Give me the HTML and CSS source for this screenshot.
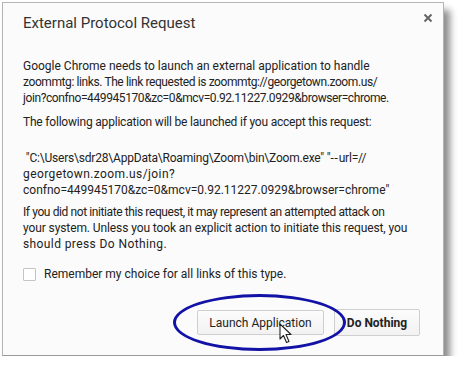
FILE: index.html
```html
<!DOCTYPE html>
<html lang="en">
<head>
  <meta charset="UTF-8" />
  <title>External Protocol Request</title>
  <link rel="stylesheet" href="styles.css">
</head>
<body>
  <div class="dialog">
    <div class="title-row">
      <h1 class="title">External Protocol Request</h1>
      <svg class="close" width="10" height="10" viewBox="0 0 10 10">
        <path d="M1.5 1.5 L8.5 8.5 M8.5 1.5 L1.5 8.5" stroke="#666" stroke-width="2"/>
      </svg>
    </div>

    <p class="msg">
      <span class="ln">Google Chrome needs to launch an external application to handle</span>
      <span class="ln tight">zoommtg: links. The link requested is zoommtg://georgetown.zoom.us/</span>
      <span class="ln tight">join?confno=449945170&amp;zc=0&amp;mcv=0.92.11227.0929&amp;browser=chrome.</span>
    </p>

    <p class="msg follow">
      <span class="ln snug">The following application will be launched if you accept this request:</span>
    </p>

    <p class="msg cmd">
      <span class="ln snug"> "C:\Users\sdr28\AppData\Roaming\Zoom\bin\Zoom.exe" "<span class="dash">--</span>url=//</span>
      <span class="ln loose">georgetown.zoom.us/join?</span>
      <span class="ln">confno=449945170&amp;zc=0&amp;mcv=0.92.11227.0929&amp;browser=chrome"</span>
    </p>

    <p class="msg">
      <span class="ln tight">If you did not initiate this request, it may represent an attempted attack on</span>
      <span class="ln slight">your system. Unless you took an explicit action to initiate this request, you</span>
      <span class="ln loose">should press Do Nothing.</span>
    </p>

    <label class="remember">
      <span class="box"></span>
      Remember my choice for all links of this type.
    </label>

    <div class="buttons">
      <button class="btn launch">Launch Application</button>
      <button class="btn nothing">Do Nothing</button>
      <div class="circle"></div>
      <svg class="cursor" width="14" height="21" viewBox="0 0 14 21">
        <path d="M1 1 L1 16 L4.5 12.5 L7.5 19.5 L10 18.5 L7 11.5 L12 11.5 Z" fill="#fff" stroke="#222" stroke-width="1.1" stroke-linejoin="round"/>
      </svg>
    </div>
  </div>
</body>
</html>
```

FILE: styles.css
```css
*, *::before, *::after {
  box-sizing: border-box;
}

body {
  margin: 0;
  background: #fff;
  font-family: 'Roboto', 'Liberation Sans', sans-serif;
  color: #222;
}

.dialog {
  margin: 2px 0 0 2px;
  width: 442px;
  height: 354px;
  background: #fbfbfb;
  border: 1px solid #b4b4b4;
  border-bottom-color: #999;
  box-shadow: 6px 8px 7px rgba(0, 0, 0, 0.45);
  padding: 0 0 0 20px;
}

.title-row {
  display: flex;
  justify-content: space-between;
  align-items: flex-start;
}

.title {
  margin: 10px 0 0 0;
  font-size: 15px;
  line-height: 20px;
  font-weight: 400;
  color: #333;
}

.close {
  margin: 10px 10px 0 0;
}

.msg {
  margin: 6px 0 0 0;
  font-size: 12px;
  line-height: 16px;
}

.ln {
  display: block;
  white-space: pre;
}

.tight {
  letter-spacing: -0.4px;
}

.snug {
  letter-spacing: -0.2px;
}

.slight {
  letter-spacing: -0.1px;
}

.loose {
  letter-spacing: 0.4px;
}

.dash {
  letter-spacing: 0.8px;
}

.title-row + .msg {
  margin-top: 25px;
}

.follow {
  margin-top: 8px;
}

.cmd {
  margin-top: 20px;
}

.remember {
  display: flex;
  align-items: center;
  gap: 8px;
  font-size: 12px;
  line-height: 16px;
  margin-top: 14px;
}

.box {
  width: 13px;
  height: 13px;
  border: 1px solid #c4c4c4;
  background: #fff;
  border-radius: 1px;
}

.buttons {
  position: relative;
  display: flex;
  justify-content: flex-end;
  align-items: center;
  gap: 10px;
  margin: 27px 23px 0 0;
}

.btn {
  font-family: 'Roboto', 'Liberation Sans', sans-serif;
  font-size: 12px;
  color: #222;
  height: 25px;
  background: linear-gradient(#fcfcfc, #f2f2f2);
  border: 1px solid #cfcfcf;
  border-radius: 2px;
  padding: 0;
}

.launch {
  width: 127px;
}

.nothing {
  width: 86px;
  height: 27px;
  font-weight: 700;
}

.circle {
  position: absolute;
  left: 150px;
  top: -15px;
  width: 173px;
  height: 57px;
  border: 3.5px solid #1212a6;
  border-radius: 50%;
}

.cursor {
  position: absolute;
  left: 256px;
  top: 14px;
}
```
